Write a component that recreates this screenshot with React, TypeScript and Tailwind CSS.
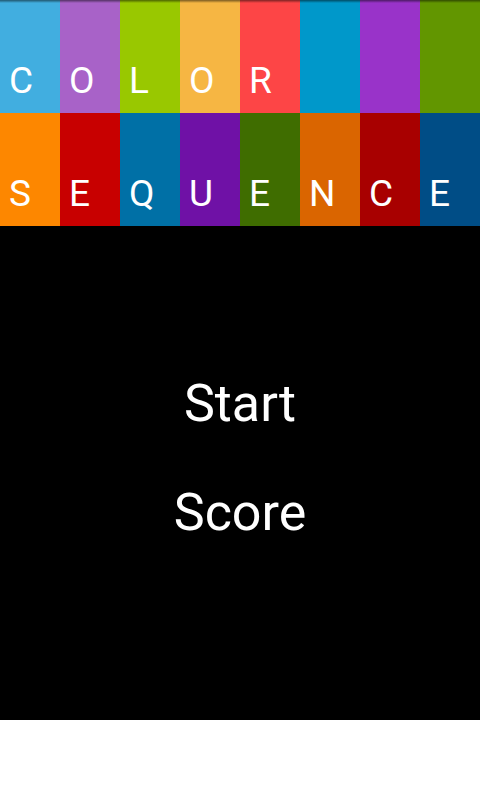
const topRow = [
  { letter: "C", bg: "bg-[#41aee0]" },
  { letter: "O", bg: "bg-[#a862c8]" },
  { letter: "L", bg: "bg-[#99c800]" },
  { letter: "O", bg: "bg-[#f6b643]" },
  { letter: "R", bg: "bg-[#fd4546]" },
  { letter: "", bg: "bg-[#0098ca]" },
  { letter: "", bg: "bg-[#9933c9]" },
  { letter: "", bg: "bg-[#629600]" },
];

const bottomRow = [
  { letter: "S", bg: "bg-[#fd8700]" },
  { letter: "E", bg: "bg-[#c80000]" },
  { letter: "Q", bg: "bg-[#0070a6]" },
  { letter: "U", bg: "bg-[#6f11a6]" },
  { letter: "E", bg: "bg-[#3f6d00]" },
  { letter: "N", bg: "bg-[#da6500]" },
  { letter: "C", bg: "bg-[#a80000]" },
  { letter: "E", bg: "bg-[#004d86]" },
];

function Tile({ letter, bg }: { letter: string; bg: string }) {
  return (
    <div className={`flex h-[113px] items-end pb-[14px] pl-[9px] ${bg}`}>
      <span className="text-[37px] leading-none text-white">{letter}</span>
    </div>
  );
}

export default function App() {
  return (
    <div className="flex h-[800px] w-[480px] flex-col bg-white font-['Roboto',sans-serif]">
      <div className="relative grid grid-cols-8">
        {topRow.map((t, i) => (
          <Tile key={`t${i}`} letter={t.letter} bg={t.bg} />
        ))}
        {bottomRow.map((t, i) => (
          <Tile key={`b${i}`} letter={t.letter} bg={t.bg} />
        ))}
        {/* status bar shadow */}
        <div className="pointer-events-none absolute inset-x-0 top-0 h-[3px] bg-gradient-to-b from-black/50 to-transparent" />
      </div>

      <div className="flex h-[494px] flex-col items-center gap-[57px] bg-black pt-[152px]">
        <button className="text-[52px] leading-none text-white">Start</button>
        <button className="text-[52px] leading-none text-white">Score</button>
      </div>
    </div>
  );
}
